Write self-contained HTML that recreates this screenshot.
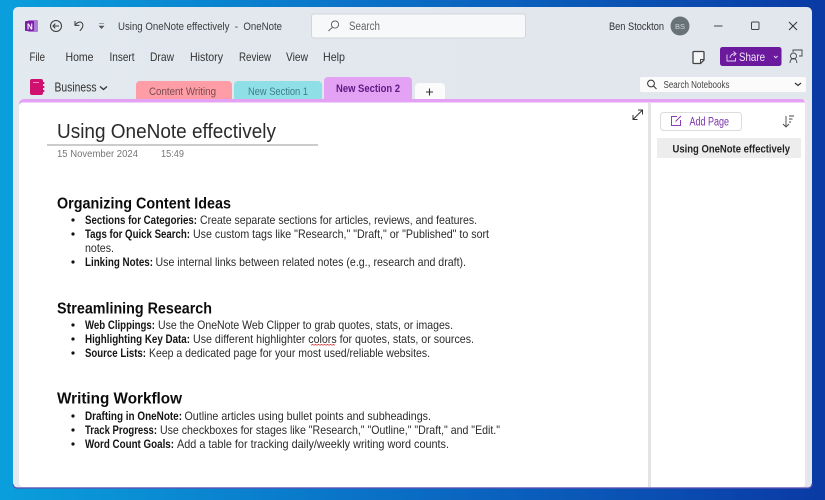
<!DOCTYPE html>
<html><head><meta charset="utf-8"><style>
html,body{margin:0;padding:0;width:825px;height:500px;overflow:hidden}
svg{display:block;filter:blur(.35px)}
text{font-family:"Liberation Sans",sans-serif;white-space:pre}
.b{font-size:11.6px;fill:#141414;font-weight:bold}
.r{font-size:11.6px;fill:#2a2a2a}
.h{font-size:16px;font-weight:bold;fill:#0c0c0c}
.m{font-size:11.2px;fill:#333}
.t{font-size:11.6px;fill:#333}
</style></head><body>
<svg width="825" height="500" viewBox="0 0 825 500" xmlns="http://www.w3.org/2000/svg">
<defs>
<linearGradient id="bg" x1="0" x2="1" y1="0" y2="0"><stop offset="0" stop-color="#0a9fdc"/><stop offset=".5" stop-color="#0a6cc4"/><stop offset="1" stop-color="#0a3aa4"/></linearGradient>
<linearGradient id="tb" x1="0" x2="1" y1="0" y2="0"><stop offset="0" stop-color="#e2e9ef"/><stop offset="1" stop-color="#e2e6ed"/></linearGradient>
</defs>
<rect width="825" height="500" fill="url(#bg)"/>
<rect x="13" y="7" width="799" height="481" rx="5" fill="url(#tb)"/>
<path d="M13 484a4 4 0 0 0 4 4H808a4 4 0 0 0 4-4" fill="none" stroke="#5a4fb4" stroke-width="1.2"/>

<!-- OneNote logo -->
<rect x="28" y="20" width="10" height="12" rx="1" fill="#b07ad8"/>
<rect x="25" y="21" width="9" height="10" rx="1" fill="#7a1fa2"/>
<text x="27" y="29.5" style="font-size:8px;font-weight:bold" fill="#fff">N</text>
<!-- back -->
<circle cx="56" cy="26" r="5.5" fill="none" stroke="#3a3a3a" stroke-width="1"/>
<path d="M59 26H53M55.3 23.6L53 26l2.300 2.400" fill="none" stroke="#3a3a3a" stroke-width="1"/>
<!-- undo -->
<path d="M75 21v4.400h4.400M75.200 25.200c2-3 4.600-4 6.400-2.600 2.200 1.600 1.600 5-1.800 8.200" fill="none" stroke="#3a3a3a" stroke-width="1"/>
<!-- qat -->
<path d="M99 23.500h5M99.200 26h4.600l-2.300 2.600z" fill="#555" stroke="#555" stroke-width=".6"/>
<text x="118" y="30" class="m" textLength="164" lengthAdjust="spacingAndGlyphs" style="fill:#3c3c3c">Using OneNote effectively  -  OneNote</text>

<!-- search -->
<rect x="311.500" y="14" width="214" height="24" rx="2.500" fill="#f7f8f9" stroke="#d3d6d9"/>
<circle cx="335" cy="24.500" r="3.600" fill="none" stroke="#555" stroke-width=".9"/>
<path d="M332.500 27.200L328.500 31" stroke="#555" stroke-width=".9"/>
<text x="349" y="30" style="font-size:11.500px;fill:#666" textLength="31" lengthAdjust="spacingAndGlyphs">Search</text>

<text x="609" y="30" class="m" textLength="55" lengthAdjust="spacingAndGlyphs">Ben Stockton</text>
<circle cx="680" cy="26" r="9.500" fill="#687378"/>
<text x="680" y="29" text-anchor="middle" style="font-size:7.500px;fill:#cfd5d8">BS</text>
<path d="M714 26h8.500" stroke="#444" stroke-width="1"/>
<rect x="751.500" y="22" width="7.500" height="7.500" rx="1" fill="none" stroke="#444" stroke-width="1"/>
<path d="M789 22l8 8M797 22l-8 8" stroke="#333" stroke-width="1"/>

<!-- menu -->
<text x="29.500" y="61" class="t" textLength="15.500" lengthAdjust="spacingAndGlyphs">File</text>
<text x="65.500" y="61" class="t" textLength="28" lengthAdjust="spacingAndGlyphs">Home</text>
<text x="109.500" y="61" class="t" textLength="25" lengthAdjust="spacingAndGlyphs">Insert</text>
<text x="150" y="61" class="t" textLength="24" lengthAdjust="spacingAndGlyphs">Draw</text>
<text x="190" y="61" class="t" textLength="33" lengthAdjust="spacingAndGlyphs">History</text>
<text x="239" y="61" class="t" textLength="32" lengthAdjust="spacingAndGlyphs">Review</text>
<text x="286" y="61" class="t" textLength="22" lengthAdjust="spacingAndGlyphs">View</text>
<text x="323" y="61" class="t" textLength="22" lengthAdjust="spacingAndGlyphs">Help</text>

<!-- sticky -->
<path d="M693 52.500a1 1 0 0 1 1-1h9a1 1 0 0 1 1 1v7.500l-3.500 3.500H694a1 1 0 0 1-1-1z" fill="#f4f5f6" stroke="#444" stroke-width="1.300" stroke-linejoin="round"/>
<path d="M704 59.500h-3.500v3.500" fill="none" stroke="#444" stroke-width="1"/>
<!-- Share -->
<rect x="720" y="47" width="61.500" height="19" rx="2.500" fill="#6b1a9e"/>
<path d="M727 54.500v6.500h8.500v-3" fill="none" stroke="#e8d8f2" stroke-width=".9"/>
<path d="M730 58c.4-3 2-4.300 5-4.300M733.500 51.500l2.500 2.200-2.500 2.200" fill="none" stroke="#e8d8f2" stroke-width=".9"/>
<text x="739" y="61" style="font-size:12px;fill:#f0e6f6" textLength="26" lengthAdjust="spacingAndGlyphs">Share</text>
<path d="M774 56l1.800 1.800 1.800-1.800" fill="none" stroke="#e8d8f2" stroke-width="1"/>
<!-- feedback person -->
<circle cx="793.500" cy="56" r="3" fill="none" stroke="#444" stroke-width=".9"/>
<path d="M790 63c.3-3.500 1.500-4.500 3.500-4.500s3 1 3.500 4.500M793 52v-2h9v6h-3" fill="none" stroke="#444" stroke-width=".9"/>

<!-- notebook -->
<rect x="30" y="79" width="13" height="16" rx="2" fill="#d0106e"/>
<rect x="42.500" y="82" width="1.800" height="2" fill="#d0106e"/><rect x="42.500" y="86" width="1.800" height="2" fill="#d0106e"/><rect x="42.500" y="90" width="1.800" height="2" fill="#d0106e"/>
<rect x="33" y="82" width="6" height="1" fill="#f08ac0"/>
<text x="54.500" y="91.500" style="font-size:13px;fill:#333" textLength="42" lengthAdjust="spacingAndGlyphs">Business</text>
<path d="M100 86.500l3.500 3 3.500-3" fill="none" stroke="#333" stroke-width="1.300"/>

<!-- tabs -->
<path d="M136 100v-15a4 4 0 0 1 4-4h88a4 4 0 0 1 4 4v15z" fill="#fe9da5"/>
<text x="149" y="95" style="font-size:11px;fill:#7a4a50" textLength="67" lengthAdjust="spacingAndGlyphs">Content Writing</text>
<path d="M234 100v-15a4 4 0 0 1 4-4h80a4 4 0 0 1 4 4v15z" fill="#8fe0e6"/>
<text x="248" y="95" style="font-size:11px;fill:#3f7f88" textLength="60" lengthAdjust="spacingAndGlyphs">New Section 1</text>
<path d="M324 100v-19a4 4 0 0 1 4-4h80a4 4 0 0 1 4 4v19z" fill="#e3a2f3"/>
<text x="336" y="92" style="font-size:11px;font-weight:bold;fill:#5e1a86" textLength="64" lengthAdjust="spacingAndGlyphs">New Section 2</text>
<path d="M415 100V87a4 4 0 0 1 4-4h22a4 4 0 0 1 4 4v13z" fill="#fbfbfc"/>
<path d="M426 92h7M429.500 88.500v7" stroke="#333" stroke-width="1.100"/>

<!-- search notebooks -->
<rect x="640" y="77" width="166" height="15" rx="2" fill="#fbfbfc"/>
<circle cx="651" cy="83.500" r="3.400" fill="none" stroke="#333" stroke-width="1"/>
<path d="M653.500 86l3 3" stroke="#333" stroke-width="1"/>
<text x="663.500" y="88" style="font-size:10px;fill:#444" textLength="66" lengthAdjust="spacingAndGlyphs">Search Notebooks</text>
<path d="M795 83l3 2.500 3-2.500" fill="none" stroke="#333" stroke-width="1.200"/>

<!-- content area -->
<path d="M19 104a4 4 0 0 1 4-4H805V484a3 3 0 0 1-3 3H23a4 4 0 0 1-4-4z" fill="#fff"/>
<path d="M19 105v-1a5 5 0 0 1 5-5H801a4 4 0 0 1 4 3v.5H24a5 5 0 0 0-5 2.500z" fill="#e3a2f3"/>
<rect x="648" y="103" width="3" height="384" fill="#e4e4e6"/>
<rect x="805" y="100" width="3" height="386" fill="#e9e4ef"/>

<!-- expand -->
<path d="M633 119.500l9.500-9.500M638 110h4.500v4.500M633 115v4.500h4.500" fill="none" stroke="#333" stroke-width="1"/>

<!-- add page -->
<rect x="660.500" y="112.500" width="81" height="18" rx="3" fill="#fff" stroke="#dcdcdc"/>
<path d="M677 116.500h-5.500v9h9v-5.500M675.500 121.500l5.500-5.500" fill="none" stroke="#8a3fb8" stroke-width="1"/>
<text x="689.500" y="125.500" style="font-size:11.500px;fill:#7a2fa8" textLength="39.500" lengthAdjust="spacingAndGlyphs">Add Page</text>
<path d="M786 116v11M783 124l3 3 3-3M789 116h5M789 119h3.500M789 122h2" fill="none" stroke="#444" stroke-width=".9"/>
<rect x="657" y="138" width="144" height="20" fill="#ededed"/>
<text x="672.500" y="152.500" style="font-size:11px;font-weight:bold;fill:#222" textLength="117.500" lengthAdjust="spacingAndGlyphs">Using OneNote effectively</text>

<!-- page title -->
<text x="57" y="138" style="font-size:20px;fill:#2a2a2a" textLength="219" lengthAdjust="spacingAndGlyphs">Using OneNote effectively</text>
<rect x="47" y="144.500" width="271" height="1" fill="#9a9a9a"/>
<text x="57" y="157" style="font-size:10px;fill:#777" textLength="81" lengthAdjust="spacingAndGlyphs">15 November 2024</text>
<text x="161" y="157" style="font-size:10px;fill:#777" textLength="23" lengthAdjust="spacingAndGlyphs">15:49</text>

<!-- headings -->
<text x="57" y="208.500" class="h" textLength="174" lengthAdjust="spacingAndGlyphs">Organizing Content Ideas</text>
<text x="57" y="313.500" class="h" textLength="155" lengthAdjust="spacingAndGlyphs">Streamlining Research</text>
<text x="57" y="403.500" class="h" textLength="125" lengthAdjust="spacingAndGlyphs">Writing Workflow</text>

<!-- bullets -->
<g fill="#111">
<circle cx="73" cy="220" r="1.600"/><circle cx="73" cy="234" r="1.600"/><circle cx="73" cy="262" r="1.600"/>
<circle cx="73" cy="325" r="1.600"/><circle cx="73" cy="339" r="1.600"/><circle cx="73" cy="353" r="1.600"/>
<circle cx="73" cy="416" r="1.600"/><circle cx="73" cy="430" r="1.600"/><circle cx="73" cy="444" r="1.600"/>
</g>

<text x="85" y="224" class="b" textLength="112" lengthAdjust="spacingAndGlyphs">Sections for Categories:</text>
<text x="200" y="224" class="r" textLength="277" lengthAdjust="spacingAndGlyphs">Create separate sections for articles, reviews, and features.</text>
<text x="85" y="238" class="b" textLength="105" lengthAdjust="spacingAndGlyphs">Tags for Quick Search:</text>
<text x="193" y="238" class="r" textLength="296" lengthAdjust="spacingAndGlyphs">Use custom tags like "Research," "Draft," or "Published" to sort</text>
<text x="85" y="252" class="r" textLength="29" lengthAdjust="spacingAndGlyphs">notes.</text>
<text x="85" y="266" class="b" textLength="68" lengthAdjust="spacingAndGlyphs">Linking Notes:</text>
<text x="155.500" y="266" class="r" textLength="310.500" lengthAdjust="spacingAndGlyphs">Use internal links between related notes (e.g., research and draft).</text>

<text x="85" y="329" class="b" textLength="70" lengthAdjust="spacingAndGlyphs">Web Clippings:</text>
<text x="158" y="329" class="r" textLength="295" lengthAdjust="spacingAndGlyphs">Use the OneNote Web Clipper to grab quotes, stats, or images.</text>
<text x="85" y="343" class="b" textLength="105" lengthAdjust="spacingAndGlyphs">Highlighting Key Data:</text>
<text x="193" y="343" class="r" textLength="281" lengthAdjust="spacingAndGlyphs">Use different highlighter colors for quotes, stats, or sources.</text>
<path d="M311 345.300l1.500-1 1.500 1 1.500-1 1.500 1 1.500-1 1.500 1 1.500-1 1.500 1 1.500-1 1.500 1 1.500-1 1.500 1 1.500-1 1.500 1 1.500-1 1.500 1" fill="none" stroke="#d23a3a" stroke-width=".7"/>
<text x="85" y="357" class="b" textLength="61" lengthAdjust="spacingAndGlyphs">Source Lists:</text>
<text x="149" y="357" class="r" textLength="281" lengthAdjust="spacingAndGlyphs">Keep a dedicated page for your most used/reliable websites.</text>

<text x="85" y="420" class="b" textLength="97" lengthAdjust="spacingAndGlyphs">Drafting in OneNote:</text>
<text x="184.500" y="420" class="r" textLength="246.500" lengthAdjust="spacingAndGlyphs">Outline articles using bullet points and subheadings.</text>
<text x="85" y="434" class="b" textLength="72" lengthAdjust="spacingAndGlyphs">Track Progress:</text>
<text x="160" y="434" class="r" textLength="340" lengthAdjust="spacingAndGlyphs">Use checkboxes for stages like "Research," "Outline," "Draft," and "Edit."</text>
<text x="85" y="448" class="b" textLength="89" lengthAdjust="spacingAndGlyphs">Word Count Goals:</text>
<text x="177" y="448" class="r" textLength="272" lengthAdjust="spacingAndGlyphs">Add a table for tracking daily/weekly writing word counts.</text>
</svg>
</body></html>
